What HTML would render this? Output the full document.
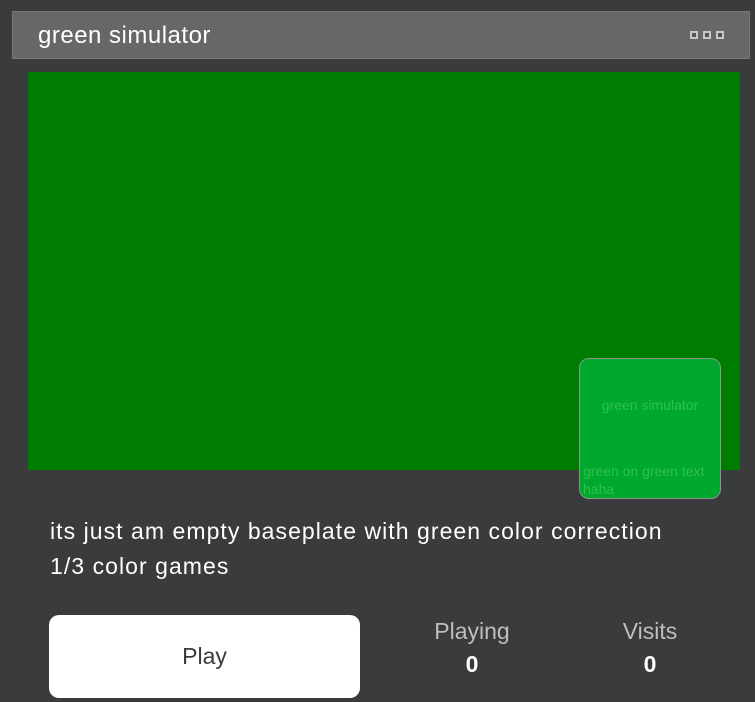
<!DOCTYPE html>
<html><head><style>
html,body{margin:0;padding:0;width:755px;height:702px;background:#393b3d;overflow:hidden;font-family:"Liberation Sans",sans-serif;}
.hdr{position:absolute;left:12px;top:11px;width:738px;height:48px;background:#666768;border:1px solid #777;box-sizing:border-box;}
.hdr span{position:absolute;left:25px;top:10px;color:#fff;font-size:24px;letter-spacing:0.5px;}
.sq{position:absolute;top:19px;width:4px;height:4px;border:2px solid #c8c8c8;background:#555;}
.green{position:absolute;left:28px;top:72px;width:712px;height:398px;background:#007d00;}
.card{position:absolute;left:579px;top:358px;width:142px;height:141px;background:#00a82d;border:1px solid #8a9a8a;border-radius:10px;box-sizing:border-box;color:#2ec24e;font-size:14px;}
.desc{position:absolute;left:50px;top:514px;color:#fff;font-size:23px;line-height:35px;letter-spacing:1.05px;}
.play{position:absolute;left:49px;top:615px;width:311px;height:83px;background:#fff;border-radius:10px;color:#393b3d;font-size:23px;text-align:center;line-height:83px;}
.stat{position:absolute;top:618px;width:120px;text-align:center;}
.stat .l{color:#bdbebe;font-size:23px;}
.stat .v{color:#fff;font-size:23px;font-weight:bold;margin-top:6px;}
</style></head><body>
<div class="hdr"><span>green simulator</span>
<div class="sq" style="left:677px"></div><div class="sq" style="left:690px"></div><div class="sq" style="left:703px"></div></div>
<div class="green"></div>
<div class="card">
<div style="position:absolute;left:0;right:0;top:38px;text-align:center">green simulator</div>
<div style="position:absolute;left:3px;top:103px;line-height:18px;">green on green text<br>haha</div>
</div>
<div class="desc">its just am empty baseplate with green color correction<br>1/3 color games</div>
<div class="play">Play</div>
<div class="stat" style="left:412px"><div class="l">Playing</div><div class="v">0</div></div>
<div class="stat" style="left:590px"><div class="l">Visits</div><div class="v">0</div></div>
</body></html>
